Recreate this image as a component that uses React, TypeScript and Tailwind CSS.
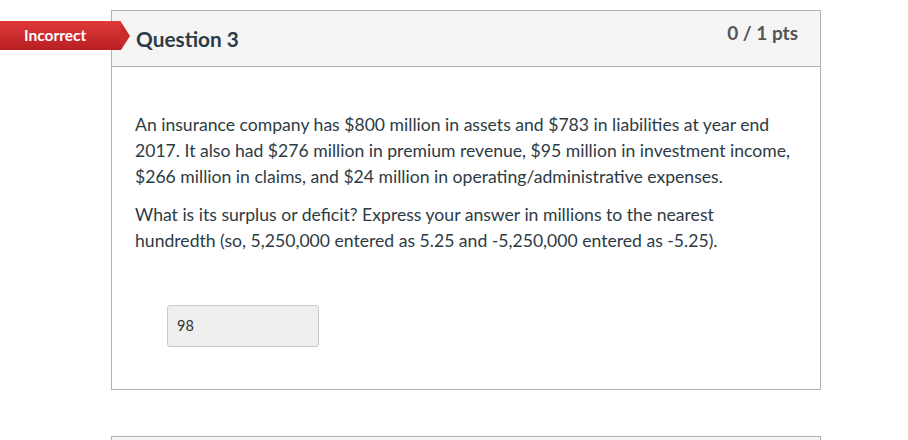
export default function App() {
  return (
    <div className="min-h-screen bg-white font-['Lato','Noto_Sans',sans-serif] text-[#2d3b45]">
      <div className="relative pt-[10px] pl-[111px] w-[821px]">
        <div className="absolute left-0 top-[21px] flex h-[29px] items-center">
          <div className="flex h-full w-[121px] items-center bg-gradient-to-b from-[#e0393a] to-[#b81f22] pl-[24px] text-[15.5px] font-bold text-white">
            Incorrect
          </div>
          <div className="h-0 w-0 border-y-[14.5px] border-l-[9px] border-y-transparent border-l-[#c92a2c]" />
        </div>

        <div className="border border-[#b2b2b2]">
          <div className="flex h-[56px] items-center justify-between border-b border-[#b2b2b2] bg-[#f5f5f5] pl-[24px] pr-[22px]">
            <h2 className="text-[20.8px] font-bold text-[#2d3b45] pt-[1px]">Question 3</h2>
            <span className="text-[19px] font-bold text-[#555] -mt-[10px]">0 / 1 pts</span>
          </div>
          <div className="pl-[23px] pr-[24px] pt-[45px] pb-[42px]">
            <div className="max-w-[662px] text-[17.6px] leading-[26px]">
              <p>
                An insurance company has $800 million in assets and $783 in liabilities at year end 2017. It also had $276 million in premium revenue, $95 million in investment income, $266 million in claims, and $24 million in operating/administrative expenses.
              </p>
              <p className="mt-[12px]">
                What is its surplus or deficit? Express your answer in millions to the nearest hundredth (so, 5,250,000 entered as 5.25 and -5,250,000 entered as -5.25).
              </p>
            </div>
            <div className="mt-[51px] ml-[32px] flex h-[42px] w-[152px] items-center rounded-[3px] border border-[#c9c9c9] bg-[#eeeeee] px-[9px] text-[14.5px] text-[#333]">
              98
            </div>
          </div>
        </div>

        <div className="mt-[46px] h-[20px] border border-b-0 border-[#b2b2b2] bg-[#f5f5f5]" />
      </div>
    </div>
  );
}
